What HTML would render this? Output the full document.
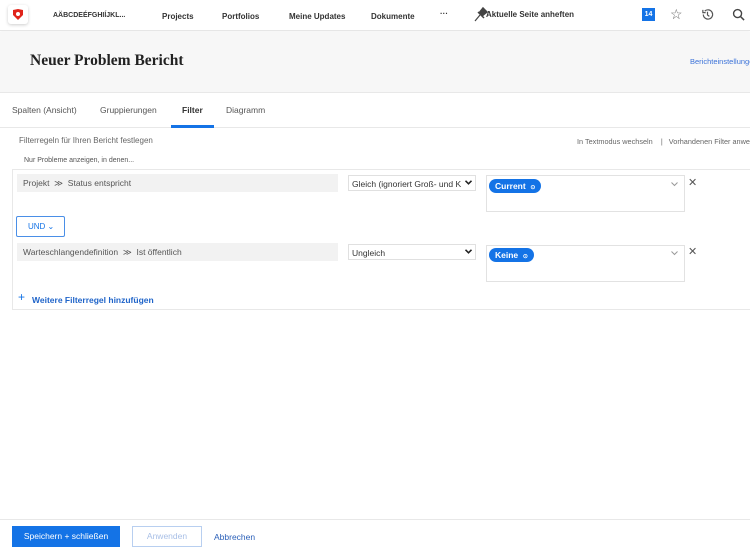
<!DOCTYPE html>
<html><head><meta charset="utf-8"><style>
*{box-sizing:border-box;margin:0;padding:0}
body{width:750px;height:552px;overflow:hidden;background:#fff;font-family:"Liberation Sans",sans-serif;color:#333;position:relative}
.a{position:absolute;white-space:nowrap}
.nav{font-size:8px;font-weight:bold;color:#333;top:12px}
.sel{border:1px solid #e0e0e0;background:#fff;font-size:8.5px;padding:3px 3px;height:16px}
.field{background:#f2f2f2;font-size:8.5px;color:#555;padding:4px 6px;height:18px}
.vbox{border:1px solid #e2e2e2;background:#fff}
.chip{background:#1473e6;color:#fff;font-size:8.5px;font-weight:bold;border-radius:8px;padding:2px 6px;height:14px}
</style></head><body>
<div class="a" style="left:0;top:0;width:750px;height:31px;border-bottom:1px solid #e6e6e6;box-shadow:0 1px 2px rgba(0,0,0,.05)"></div>
<div class="a" style="left:8px;top:5px;width:20px;height:19px;border-radius:3px;box-shadow:0 1px 3px rgba(0,0,0,.2);background:#fff"></div>
<svg class="a" style="left:12px;top:9px" width="12" height="11" viewBox="0 0 12 11"><path d="M6 11L1 6V1l5-1 5 1v5z" fill="#e0241b"/><circle cx="6" cy="5" r="2" fill="#fff"/></svg>
<div class="a nav" style="left:53px;font-size:7px">AÄBCDEÉFGHIÍJKL...</div>
<div class="a nav" style="left:162px">Projects</div>
<div class="a nav" style="left:222px">Portfolios</div>
<div class="a nav" style="left:289px">Meine Updates</div>
<div class="a nav" style="left:371px">Dokumente</div>
<div class="a nav" style="left:440px;top:9px">···</div>
<svg class="a" style="left:474px;top:6px" width="14" height="16" viewBox="0 0 14 16"><path d="M1 15L6 9" stroke="#444" stroke-width="1.2"/><path d="M5 7l4-5 4 4-5 4z M4 6l6 6" fill="#444" stroke="#444" stroke-width="1.5"/></svg>
<div class="a nav" style="left:486px;top:10px">Aktuelle Seite anheften</div>
<div class="a" style="left:642px;top:8px;width:13px;height:13px;background:#1473e6;color:#fff;font-size:7px;font-weight:bold;text-align:center;line-height:13px">14</div>
<div class="a" style="left:670px;top:6px;font-size:14px;color:#666">☆</div>
<svg class="a" style="left:701px;top:8px" width="13" height="13" viewBox="0 0 14 14"><path d="M2.5 7a5 5 0 1 0 1.5-3.6M2 2v3h3M7 4v3.5l2 1.5" fill="none" stroke="#555" stroke-width="1.3"/></svg>
<svg class="a" style="left:732px;top:8px" width="13" height="13" viewBox="0 0 14 14"><circle cx="6" cy="6" r="4.3" fill="none" stroke="#444" stroke-width="1.5"/><path d="M9 9l4 4" stroke="#444" stroke-width="1.6"/></svg>

<div class="a" style="left:0;top:32px;width:750px;height:61px;background:#f7f7f7;border-bottom:1px solid #e8e8e8"></div>
<div class="a" style="left:30px;top:52px;font-family:'Liberation Serif',serif;font-size:15.5px;font-weight:bold;color:#222">Neuer Problem Bericht</div>
<div class="a" style="left:690px;top:57px;font-size:7.5px;color:#3b72d9">Berichteinstellungen</div>

<div class="a" style="left:0;top:127px;width:750px;height:1px;background:#e8e8e8"></div>
<div class="a" style="left:12px;top:105px;font-size:8.5px;color:#555">Spalten (Ansicht)</div>
<div class="a" style="left:100px;top:105px;font-size:8.5px;color:#555">Gruppierungen</div>
<div class="a" style="left:182px;top:105px;font-size:8.5px;font-weight:bold;color:#333">Filter</div>
<div class="a" style="left:171px;top:125px;width:43px;height:3px;background:#1473e6"></div>
<div class="a" style="left:226px;top:105px;font-size:8.5px;color:#555">Diagramm</div>

<div class="a" style="left:19px;top:136px;font-size:8px;color:#666">Filterregeln für Ihren Bericht festlegen</div>
<div class="a" style="left:577px;top:137px;font-size:7.3px;color:#666">In Textmodus wechseln &nbsp;&nbsp; | &nbsp;&nbsp;Vorhandenen Filter anwenden</div>
<div class="a" style="left:24px;top:157px;font-size:7px;color:#555">Nur Probleme anzeigen, in denen...</div>

<div class="a" style="left:12px;top:169px;width:745px;height:141px;border:1px solid #e8e8e8"></div>
<div class="a field" style="left:17px;top:174px;width:321px">Projekt &nbsp;≫&nbsp; Status entspricht</div>
<div class="a sel" style="left:348px;top:175px;width:128px">Gleich (ignoriert Groß- und K<svg style="position:absolute;right:3px;top:4px" width="7" height="5" viewBox="0 0 7 5"><path d="M.5 .8L3.5 3.8 6.5 .8" fill="none" stroke="#222" stroke-width="1.6"/></svg></div>
<div class="a vbox" style="left:486px;top:175px;width:199px;height:37px"></div>
<div class="a chip" style="left:489px;top:179px">Current &nbsp;<span style="font-size:6px">⊙</span></div>
<svg class="a" style="left:671px;top:182px" width="7" height="5" viewBox="0 0 7 5"><path d="M.5 .5L3.5 3.5 6.5 .5" fill="none" stroke="#999" stroke-width="1"/></svg>
<div class="a" style="left:688px;top:176px;font-size:11px;color:#555">✕</div>

<div class="a" style="left:16px;top:216px;width:49px;height:21px;border:1px solid #4a8fe7;border-radius:2px;font-size:8px;color:#1473e6;padding:5px 0 0 11px">UND ⌄</div>

<div class="a field" style="left:17px;top:243px;width:321px">Warteschlangendefinition &nbsp;≫&nbsp; Ist öffentlich</div>
<div class="a sel" style="left:348px;top:244px;width:128px">Ungleich<svg style="position:absolute;right:3px;top:4px" width="7" height="5" viewBox="0 0 7 5"><path d="M.5 .8L3.5 3.8 6.5 .8" fill="none" stroke="#222" stroke-width="1.6"/></svg></div>
<div class="a vbox" style="left:486px;top:245px;width:199px;height:37px"></div>
<div class="a chip" style="left:489px;top:248px">Keine &nbsp;<span style="font-size:6px">⊙</span></div>
<svg class="a" style="left:671px;top:251px" width="7" height="5" viewBox="0 0 7 5"><path d="M.5 .5L3.5 3.5 6.5 .5" fill="none" stroke="#999" stroke-width="1"/></svg>
<div class="a" style="left:688px;top:245px;font-size:11px;color:#555">✕</div>

<div class="a" style="left:18px;top:290px;font-size:12px;color:#1473e6">+</div>
<div class="a" style="left:32px;top:295px;font-size:8.5px;font-weight:bold;color:#1f64c9">Weitere Filterregel hinzufügen</div>

<div class="a" style="left:0;top:519px;width:750px;height:1px;background:#e8e8e8"></div>
<div class="a" style="left:12px;top:526px;width:108px;height:21px;background:#1473e6;color:#fff;font-size:8.5px;text-align:center;line-height:21px">Speichern + schließen</div>
<div class="a" style="left:132px;top:526px;width:70px;height:21px;border:1px solid #b8cff0;color:#a8bfe6;font-size:8.5px;text-align:center;line-height:19px">Anwenden</div>
<div class="a" style="left:214px;top:532px;font-size:8.5px;color:#2a5fb8">Abbrechen</div>
</body></html>
